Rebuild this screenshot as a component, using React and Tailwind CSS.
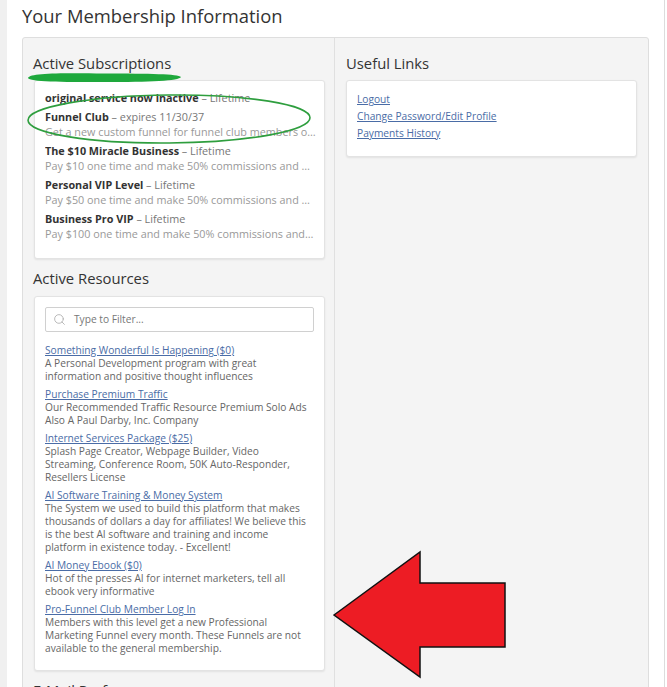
import { Search } from 'lucide-react'

const subscriptions = [
  { title: 'original service now inactive', meta: 'Lifetime' },
  { title: 'Funnel Club', meta: 'expires 11/30/37', desc: 'Get a new custom funnel for funnel club members on...' },
  { title: 'The $10 Miracle Business', meta: 'Lifetime', desc: 'Pay $10 one time and make 50% commissions and m...' },
  { title: 'Personal VIP Level', meta: 'Lifetime', desc: 'Pay $50 one time and make 50% commissions and m...' },
  { title: 'Business Pro VIP', meta: 'Lifetime', desc: 'Pay $100 one time and make 50% commissions and ...' },
]

const resources = [
  {
    label: 'Something Wonderful Is Happening ($0)',
    desc: 'A Personal Development program with great information and positive thought influences',
  },
  {
    label: 'Purchase Premium Traffic',
    desc: 'Our Recommended Traffic Resource Premium Solo Ads Also A Paul Darby, Inc. Company',
  },
  {
    label: 'Internet Services Package ($25)',
    desc: 'Splash Page Creator, Webpage Builder, Video Streaming, Conference Room, 50K Auto-Responder, Resellers License',
  },
  {
    label: 'AI Software Training & Money System',
    desc: 'The System we used to build this platform that makes thousands of dollars a day for affiliates! We believe this is the best AI software and training and income platform in existence today. - Excellent!',
  },
  {
    label: 'AI Money Ebook ($0)',
    desc: 'Hot of the presses AI for internet marketers, tell all ebook very informative',
  },
  {
    label: 'Pro-Funnel Club Member Log In',
    desc: 'Members with this level get a new Professional Marketing Funnel every month. These Funnels are not available to the general membership.',
  },
]

const links = ['Logout', 'Change Password/Edit Profile', 'Payments History']

function Card({ className, children }) {
  return (
    <div className={'bg-white border border-[#e3e3e3] rounded-[3px] shadow-[0_1px_2px_rgba(0,0,0,0.08)] ' + className}>
      {children}
    </div>
  )
}

export default function App() {
  return (
    <div className="relative flex min-h-[687px] bg-white font-['Open_Sans',sans-serif] text-[#333] overflow-hidden">
      <div className="w-[7px] shrink-0 bg-[#f0f0f0]" />
      <div className="w-[658px] shrink-0 border-r border-[#dcdcdc] pl-[15px] pr-[15px]">
        <h1 className="pt-[2px] text-[18.4px] leading-[28px] text-[#333] mb-[7px]">Your Membership Information</h1>

        <div className="grid grid-cols-[312px_1fr] bg-[#f4f4f4] border border-[#dedede] rounded-[3px] min-h-[660px]">
          {/* left column */}
          <div className="border-r border-[#e0e0e0] pl-[10px] pr-[9px] pt-[14px]">
            <h2 className="text-[14.8px] leading-[22px] mb-[6px]">Active Subscriptions</h2>
            <Card className="ml-[1px] pl-[10px] pr-[8px] pt-[9px] pb-[17px]">
              {subscriptions.map((s) => (
                <div key={s.title} className="mb-[4px] last:mb-0 text-[10.8px] leading-[15px]">
                  <div className="truncate">
                    <span className="font-bold text-[#333]">{s.title}</span>
                    <span className="text-[#777]"> – {s.meta}</span>
                  </div>
                  {s.desc && <div className="truncate text-[#999]">{s.desc}</div>}
                </div>
              ))}
            </Card>

            <h2 className="text-[14.8px] leading-[22px] mt-[8px] mb-[7px]">Active Resources</h2>
            <Card className="ml-[1px] pl-[10px] pr-[13px] pt-[10px] pb-[15px]">
              <div className="flex items-center gap-[8px] h-[25px] -mr-[3px] border border-[#d0d0d0] rounded-[2px] px-[7px] mb-[12px]">
                <Search className="w-[13px] h-[13px] text-[#aaa]" strokeWidth={1.5} />
                <span className="text-[10.2px] text-[#777]">Type to Filter...</span>
              </div>
              {resources.map((r) => (
                <div key={r.label} className="mb-[5px] last:mb-0 text-[10.2px] leading-[13px]">
                  <a href="#" className="text-[#4a6ca6] underline">{r.label}</a>
                  <div className="text-[#666]">{r.desc}</div>
                </div>
              ))}
            </Card>

            <h2 className="text-[14.8px] leading-[22px] mt-[8px]">E-Mail Preferences</h2>
          </div>

          {/* right column */}
          <div className="pl-[11px] pr-[11px] pt-[14px]">
            <h2 className="text-[14.8px] leading-[22px] mb-[6px]">Useful Links</h2>
            <Card className="pl-[10px] pt-[10px] pb-[14px]">
              {links.map((l) => (
                <div key={l} className="text-[10.2px] leading-[17px]">
                  <a href="#" className="text-[#4a6ca6] underline">{l}</a>
                </div>
              ))}
            </Card>
          </div>
        </div>
      </div>

      {/* annotations drawn over the screenshot */}
      <svg className="absolute inset-0 pointer-events-none" width="667" height="687" viewBox="0 0 667 687">
        <path d="M28 78 C 30 73, 60 73, 104 73.5 C 150 73.5, 178 74, 181 77 C 179 81, 150 82, 104 82 C 60 82, 30 82, 28 78 Z" fill="#1ea83c" />
        <ellipse cx="169" cy="119" rx="141" ry="24" fill="none" stroke="#2e9e3e" strokeWidth="1.6" transform="rotate(-0.5 169 119)" />
        <polygon
          points="334,615 420,552 420,583 505,583 505,647 420,647 420,677"
          fill="#ed1c24"
          stroke="#111"
          strokeWidth="1.5"
          strokeLinejoin="miter"
        />
      </svg>
    </div>
  )
}
